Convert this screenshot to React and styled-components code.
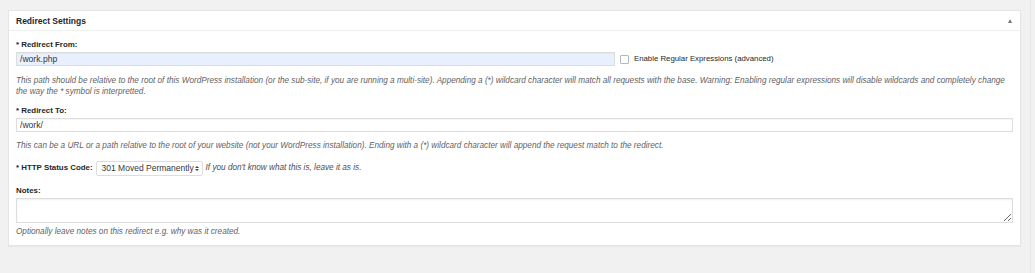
import React from "react";
import styled, { createGlobalStyle } from "styled-components";

const Global = createGlobalStyle`
  html, body { margin: 0; padding: 0; background: #f1f1f1; }
  body { font-family: "Liberation Sans", Arial, sans-serif; color: #23282d; }
`;

const Page = styled.div`
  width: 1031px;
  min-height: 273px;
  box-sizing: border-box;
  border-right: 1px solid #e6e6e6;
  padding: 10px 0 0 8px;
`;

const Panel = styled.section`
  width: 1013px;
  box-sizing: border-box;
  background: #fff;
  border: 1px solid #e5e5e5;
  box-shadow: 0 1px 1px rgba(0, 0, 0, 0.04);
`;

const Header = styled.header`
  height: 20px;
  box-sizing: border-box;
  display: flex;
  align-items: center;
  justify-content: space-between;
  padding: 0 8px 0 7px;
  border-bottom: 1px solid #eee;
`;

const Title = styled.h2`
  margin: 0;
  font-size: 8.5px;
  font-weight: bold;
  color: #23282d;
`;

const Toggle = styled.span`
  width: 0;
  height: 0;
  border-left: 2.5px solid transparent;
  border-right: 2.5px solid transparent;
  border-bottom: 4px solid #72777c;
`;

const Body = styled.div`
  padding: 9px 7px 8px 7px;
  font-size: 8px;
  line-height: 10px;
`;

const Label = styled.label`
  display: block;
  font-size: 7.9px;
  font-weight: bold;
  line-height: 10px;
  margin-top: ${(p) => p.$mt || 0}px;
  margin-bottom: 2px;
  color: #23282d;
`;

const Row = styled.div`
  display: flex;
  align-items: center;
`;

const TextInput = styled.input`
  display: block;
  box-sizing: border-box;
  height: 14px;
  width: ${(p) => p.$w || "100%"};
  margin: 0;
  border: 1px solid #ddd;
  background: ${(p) => (p.$autofill ? "#e8f0fe" : "#fff")};
  box-shadow: inset 0 1px 1px rgba(0, 0, 0, 0.04);
  font-family: "Liberation Sans", Arial, sans-serif;
  font-size: 8.6px;
  color: #32373c;
  padding: 0 3px;
  outline: none;
`;

const CheckLabel = styled.label`
  display: flex;
  align-items: center;
  margin-left: 5px;
  font-size: 7.8px;
  color: #23282d;
`;

const Box = styled.span`
  width: 9px;
  height: 9px;
  box-sizing: border-box;
  border: 1px solid #b4b9be;
  border-radius: 1px;
  background: #fff;
  margin-right: 5px;
`;

const Help = styled.p`
  margin: ${(p) => p.$mt || 8}px 0 0 0;
  font-size: 8.2px;
  line-height: 11px;
  font-style: italic;
  color: #5f6266;
`;

const StatusRow = styled.div`
  display: flex;
  align-items: center;
  margin-top: 9.5px;
  height: 15px;
`;

const InlineLabel = styled.span`
  font-size: 7.9px;
  font-weight: bold;
  margin-right: 3px;
`;

const Select = styled.div`
  box-sizing: border-box;
  height: 15px;
  width: 107px;
  border: 1px solid #ddd;
  border-radius: 2px;
  background: #fff;
  display: flex;
  align-items: center;
  justify-content: space-between;
  padding: 0 3px 0 5px;
  font-size: 8.5px;
  color: #32373c;
`;

const Arrows = styled.span`
  display: flex;
  flex-direction: column;
  gap: 1px;
  &::before, &::after {
    content: "";
    width: 0;
    height: 0;
    border-left: 2px solid transparent;
    border-right: 2px solid transparent;
  }
  &::before { border-bottom: 2.5px solid #444; }
  &::after { border-top: 2.5px solid #444; }
`;

const InlineHelp = styled.span`
  font-size: 8.2px;
  font-style: italic;
  color: #4a4d52;
  margin-left: 3px;
`;

const TextArea = styled.textarea`
  display: block;
  box-sizing: border-box;
  width: 100%;
  height: 25px;
  margin: 0;
  border: 1px solid #ddd;
  box-shadow: inset 0 1px 2px rgba(0, 0, 0, 0.07);
  resize: vertical;
  outline: none;
  font-family: "Liberation Sans", Arial, sans-serif;
  font-size: 8.6px;
`;

export default function App() {
  return (
    <>
      <Global />
      <Page>
        <Panel>
          <Header>
            <Title>Redirect Settings</Title>
            <Toggle />
          </Header>
          <Body>
            <Label>* Redirect From:</Label>
            <Row>
              <TextInput $w="599px" $autofill defaultValue="/work.php" />
              <CheckLabel>
                <Box />
                Enable Regular Expressions (advanced)
              </CheckLabel>
            </Row>
            <Help $mt={9}>
              This path should be relative to the root of this WordPress installation (or the sub-site, if you are running a multi-site). Appending a (*) wildcard character will match all requests with the base. Warning: Enabling regular expressions will disable wildcards and completely change
              <br />
              the way the * symbol is interpretted.
            </Help>
            <Label $mt={9}>* Redirect To:</Label>
            <TextInput defaultValue="/work/" />
            <Help $mt={8}>
              This can be a URL or a path relative to the root of your website (not your WordPress installation). Ending with a (*) wildcard character will append the request match to the redirect.
            </Help>
            <StatusRow>
              <InlineLabel>* HTTP Status Code:</InlineLabel>
              <Select>
                301 Moved Permanently
                <Arrows />
              </Select>
              <InlineHelp>If you don't know what this is, leave it as is.</InlineHelp>
            </StatusRow>
            <Label $mt={10}>Notes:</Label>
            <TextArea />
            <Help $mt={3}>Optionally leave notes on this redirect e.g. why was it created.</Help>
          </Body>
        </Panel>
      </Page>
    </>
  );
}
